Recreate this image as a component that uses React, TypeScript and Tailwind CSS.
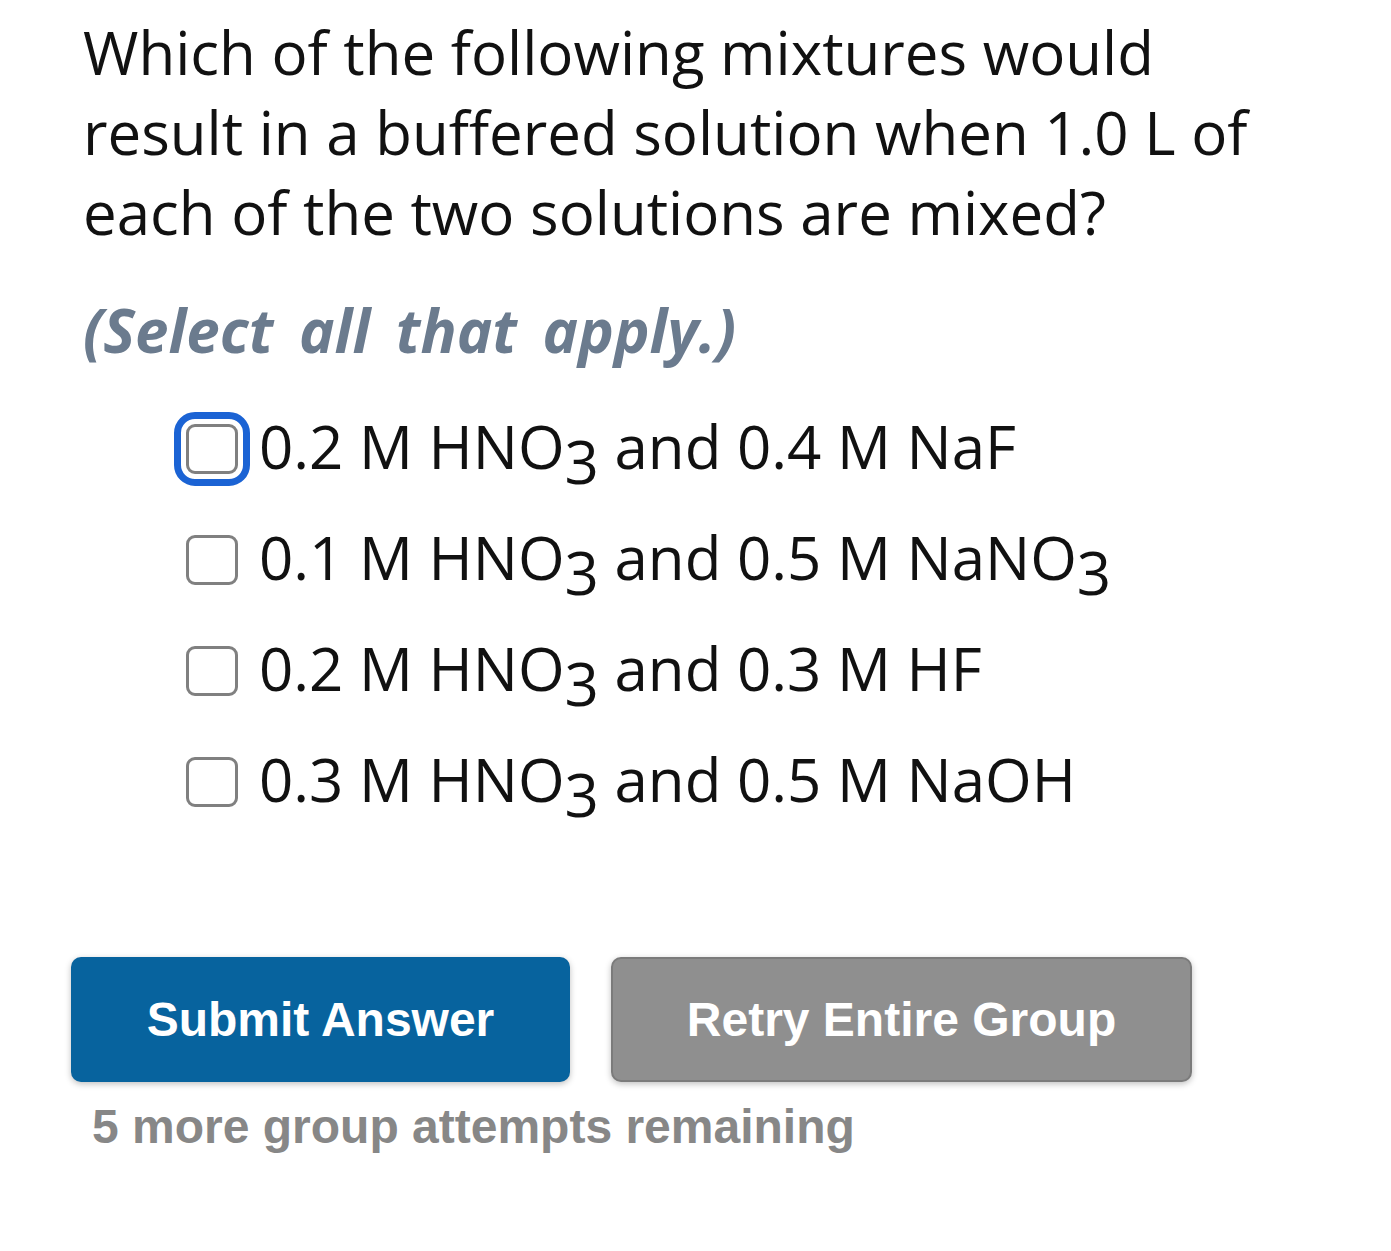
import React from "react";

const options: [string, string][] = [
  ["0.2 M HNO", " and 0.4 M NaF"],
  ["0.1 M HNO", " and 0.5 M NaNO3"],
  ["0.2 M HNO", " and 0.3 M HF"],
  ["0.3 M HNO", " and 0.5 M NaOH"],
];

function Sub3() {
  return <span className="align-[-15px] leading-none">3</span>;
}

function OptionText({ a, b }: { a: string; b: string }) {
  const endsWith3 = b.endsWith("NaNO3");
  return (
    <span className="text-[60px] leading-[80px] text-[#111]">
      {a}
      <Sub3 />
      {endsWith3 ? (
        <>
          {b.slice(0, -1)}
          <Sub3 />
        </>
      ) : (
        b
      )}
    </span>
  );
}

export default function App() {
  return (
    <div
      className="w-[1391px] min-h-[1251px] bg-white"
      style={{ fontFamily: '"Open Sans", sans-serif' }}
    >
      <div className="pl-[83px] pt-[12px]">
        <p className="w-[1200px] text-[60px] leading-[80px] text-[#111]">
          Which of the following mixtures would result in a buffered solution when 1.0 L of each of the two
          solutions are mixed?
        </p>
        <p className="mt-[38px] text-[60px] leading-[80px] font-bold italic text-[#6b7b8e] [word-spacing:10px]">
          (Select all that apply.)
        </p>
      </div>

      <div className="mt-[23px] pl-[186px] flex flex-col">
        {options.map(([a, b], i) => (
          <label key={i} className="h-[111px] flex items-center gap-[21px]">
            <span
              className={
                "w-[52px] h-[50px] shrink-0 rounded-[9px] border-[3px] border-[#808080] bg-white " +
                (i === 0 ? "outline-[7px] outline-solid outline-[#1b63d4] outline-offset-[5px]" : "")
              }
            />
            <OptionText a={a} b={b} />
          </label>
        ))}
      </div>

      <div
        className="mt-[120px] pl-[71px]"
        style={{ fontFamily: '"Liberation Sans", Arial, sans-serif' }}
      >
        <div className="flex gap-[41px]">
          <button className="w-[499px] h-[125px] rounded-[10px] bg-[#07639e] text-white font-bold text-[48px] shadow-[0_2px_6px_rgba(0,0,0,0.25)]">
            Submit Answer
          </button>
          <button className="w-[581px] h-[125px] rounded-[10px] bg-[#8f8f8f] border-2 border-[#7b7b7b] text-white font-bold text-[48px] shadow-[0_2px_6px_rgba(0,0,0,0.25)]">
            Retry Entire Group
          </button>
        </div>
        <p className="mt-[9px] ml-[21px] text-[48px] font-bold text-[#878787]">
          5 more group attempts remaining
        </p>
      </div>
    </div>
  );
}
